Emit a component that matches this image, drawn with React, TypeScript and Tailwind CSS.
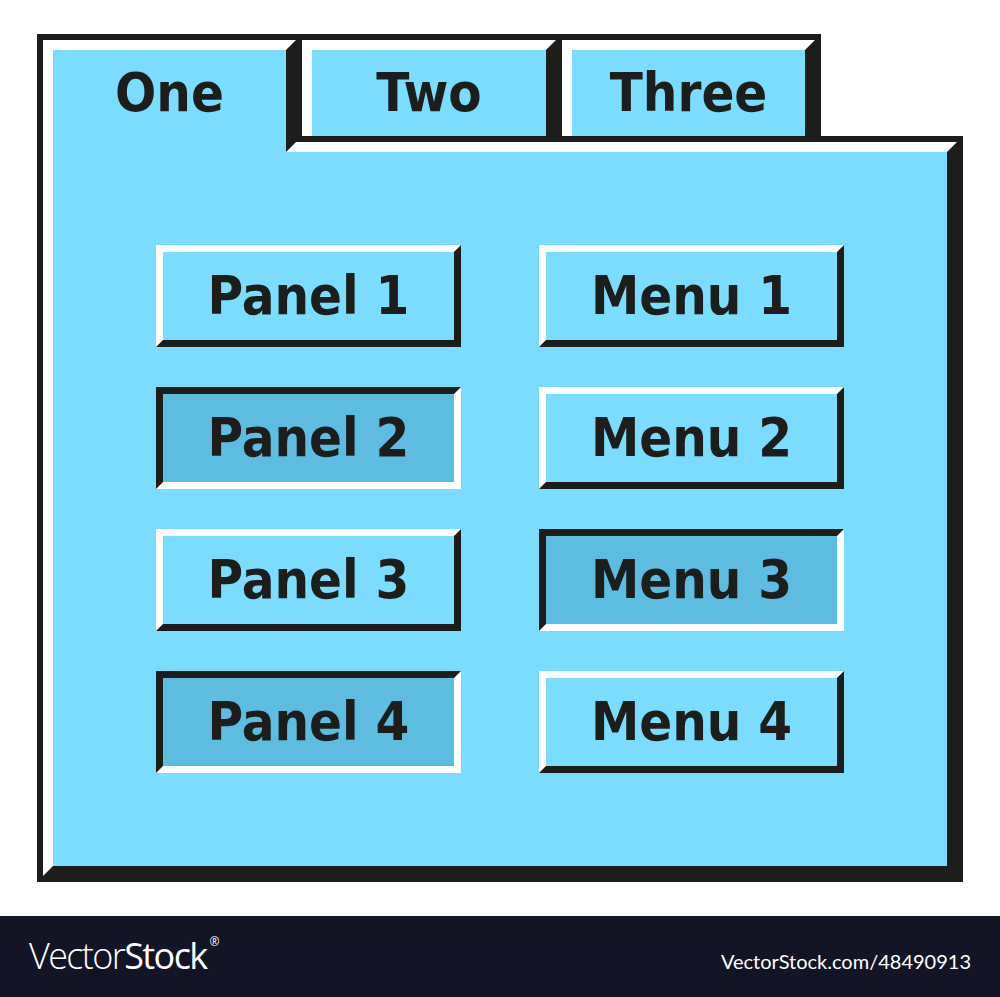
import React from "react";

const INK = "border-[#1d1d1b]";
const label = "font-['DejaVu_Sans_Condensed','DejaVu_Sans',sans-serif] font-bold text-[54px] leading-none text-[#1d1d1b]";

type Btn = { text: string; down?: boolean };

const LEFT: Btn[] = [
  { text: "Panel 1" },
  { text: "Panel 2", down: true },
  { text: "Panel 3" },
  { text: "Panel 4", down: true },
];

const RIGHT: Btn[] = [
  { text: "Menu 1" },
  { text: "Menu 2" },
  { text: "Menu 3", down: true },
  { text: "Menu 4" },
];

function Button({ text, down }: Btn) {
  return (
    <div
      className={
        down
          ? "flex h-[102px] w-[305px] items-center justify-center border-[7px] border-t-[#1d1d1b] border-l-[#1d1d1b] border-r-white border-b-white bg-[#5cbde1]"
          : "flex h-[102px] w-[305px] items-center justify-center border-[7px] border-t-white border-l-white border-r-[#1d1d1b] border-b-[#1d1d1b] bg-[#7adcfe]"
      }
    >
      <span className={label}>{text}</span>
    </div>
  );
}

// first tab runs down into the body, so it has no right outline of its own;
// the next tab draws the shared black line
function FirstTab({ text }: { text: string }) {
  return (
    <div className={`h-[118px] w-[259px] border-l-[6px] border-t-[6px] ${INK}`}>
      <div className="flex h-full flex-col border-t-[10px] border-l-[10px] border-r-[10px] border-t-white border-l-white border-r-[#1d1d1b] bg-[#7adcfe] [clip-path:polygon(0_0,100%_0,100%_102px,calc(100%-10px)_100%,0_100%)]">
        <div className="flex h-[86px] items-center justify-center">
          <span className={label}>{text}</span>
        </div>
      </div>
    </div>
  );
}

function Tab({ text, lead }: { text: string; lead?: boolean }) {
  return (
    <div className={`h-[102px] border-t-[6px] border-r-[6px] ${INK} ${lead ? "w-[266px] border-l-[6px]" : "w-[259px]"}`}>
      <div className="flex h-full items-center justify-center border-t-[10px] border-l-[10px] border-r-[10px] border-t-white border-l-white border-r-[#1d1d1b] bg-[#7adcfe]">
        <span className={label}>{text}</span>
      </div>
    </div>
  );
}

export default function App() {
  return (
    <div className="flex h-[997px] w-[1000px] flex-col bg-white">
      <div className="h-[916px] pl-[37px] pt-[34px]">
        <div className="w-[926px]">
          {/* tabs */}
          <div className="relative z-10 -mb-[16px] flex items-start">
            <FirstTab text="One" />
            <Tab text="Two" lead />
            <Tab text="Three" />
          </div>

          {/* body */}
          <div className={`h-[746px] border-[6px] ${INK}`}>
            <div className="flex h-full items-center justify-center border-[10px] border-t-white border-l-white border-r-[#1d1d1b] border-b-[#1d1d1b] bg-[#7adcfe]">
              <div className="grid grid-cols-2 gap-x-[78px] gap-y-[40px]">
                {LEFT.map((b, i) => (
                  <React.Fragment key={b.text}>
                    <Button {...b} />
                    <Button {...RIGHT[i]} />
                  </React.Fragment>
                ))}
              </div>
            </div>
          </div>
        </div>
      </div>

      {/* footer */}
      <div className="flex h-[81px] items-baseline justify-between bg-[#131425] px-[29px] pt-[22px] text-white">
        <div className="flex items-start font-['Open_Sans',sans-serif] text-[36px] leading-none tracking-[-1.6px]">
          <span className="font-light">Vector</span>
          <span className="font-medium">Stock</span>
          <span className="ml-[3px] mt-[-2px] text-[12px] font-normal tracking-normal">®</span>
        </div>
        <div className="font-['Lato',sans-serif] text-[20px] leading-none">VectorStock.com/48490913</div>
      </div>
    </div>
  );
}
